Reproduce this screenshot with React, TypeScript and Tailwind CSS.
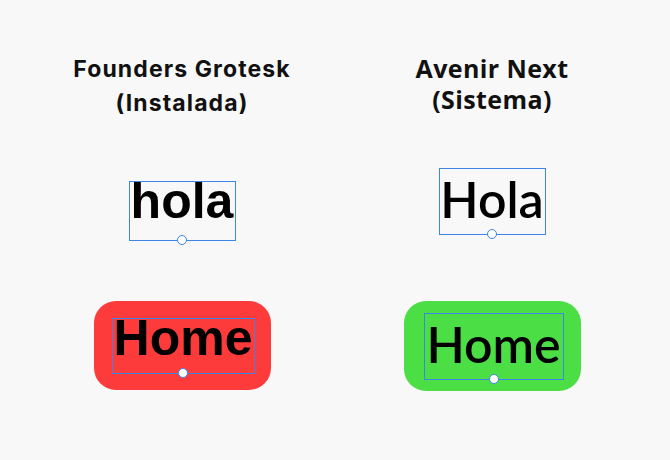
import React from 'react';

const grotesk = { fontFamily: '"Liberation Sans", Arial, sans-serif' };
const heading = { fontFamily: 'Inter, "Liberation Sans", sans-serif' };
const avenir = { fontFamily: '"Open Sans", Lato, sans-serif' };
const avenirBody = { fontFamily: 'Lato, "Open Sans", sans-serif' };

// Selection frame with the little round handle on its bottom edge
const Frame: React.FC<{ className: string; children: React.ReactNode }> = ({ className, children }) => (
  <div className={`relative border border-[#3d85e6] flex justify-center ${className}`}>
    {children}
    <span className="absolute left-1/2 -bottom-[5px] -translate-x-1/2 w-[10px] h-[10px] rounded-full bg-white border-[1.5px] border-[#3d85e6]" />
  </div>
);

export default function App() {
  return (
    <div className="w-[670px] h-[460px] bg-[#f8f8f8] flex pl-[27px] text-black overflow-hidden">
      {/* Installed font */}
      <div className="w-[310px] flex flex-col items-center" style={grotesk}>
        <div className="pt-[52px] text-[23px] leading-[34px] font-bold tracking-[1.1px] text-center text-[#111]" style={heading}>
          <div>Founders Grotesk</div>
          <div>(Instalada)</div>
        </div>

        <Frame className="mt-[61px] w-[107px] h-[60px]">
          <span className="-mt-[6px] text-[50px] leading-none font-bold">hola</span>
        </Frame>

        <div className="mt-[60px] w-[177px] h-[89px] rounded-[22px] bg-[#fd3b3b] flex pt-[17px] pl-[18px]">
          <Frame className="w-[143px] h-[56px]">
            <span className="-mt-[6px] text-[50px] leading-none font-bold">Home</span>
          </Frame>
        </div>
      </div>

      {/* System font */}
      <div className="w-[310px] flex flex-col items-center" style={avenir}>
        <div className="pt-[53px] text-[25px] leading-[31px] font-bold tracking-[0.4px] text-center text-[#111]">
          <div>Avenir Next</div>
          <div>(Sistema)</div>
        </div>

        <Frame className="mt-[53px] w-[107px] h-[67px]">
          <span className="mt-[5px] text-[50px] leading-none font-semibold" style={avenirBody}>Hola</span>
        </Frame>

        <div className="mt-[66px] w-[177px] h-[90px] rounded-[22px] bg-[#4cdf45] flex pt-[12px] pl-[20px]">
          <Frame className="w-[140px] h-[67px]">
            <span className="mt-[5px] text-[50px] leading-none font-semibold" style={avenirBody}>Home</span>
          </Frame>
        </div>
      </div>
    </div>
  );
}
